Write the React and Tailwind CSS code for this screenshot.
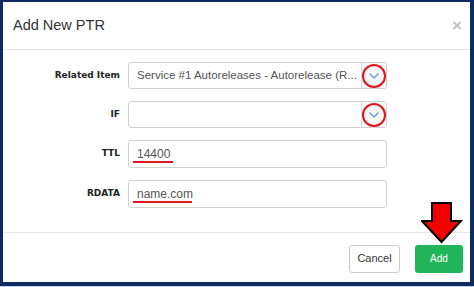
import React from "react";

function Chevron() {
  return (
    <svg width="10" height="6" viewBox="0 0 10 6" fill="none">
      <path d="M1 1l4 4 4-4" stroke="#6fa3d6" strokeWidth="1.6" strokeLinecap="round" strokeLinejoin="round" />
    </svg>
  );
}

function SelectBox({ value }) {
  return (
    <div className="relative flex h-[27px] w-[259px] rounded-[3px] border border-[#cfcfcf] bg-white">
      <div className="flex flex-1 items-center overflow-hidden whitespace-nowrap pl-[8px] text-[11.5px] text-[#555]">{value}</div>
      <div className="flex w-[25px] items-center justify-center border-l border-[#dcdcdc] bg-[#f7f7f7]">
        <Chevron />
      </div>
      <div className="absolute right-[0px] top-[1px] h-[24px] w-[24px] rounded-full border-2 border-[#e0141e]" />
    </div>
  );
}

function TextBox({ value, lineW }) {
  return (
    <div className="relative flex h-[28px] w-[259px] items-center rounded-[3px] border border-[#cfcfcf] bg-white pl-[8px] text-[12px] text-[#555]">
      {value}
      <div className="absolute bottom-[4px] left-[4px] h-[2px] bg-[#e3151c]" style={{ width: lineW }} />
    </div>
  );
}

function Row({ label, children, mt }) {
  return (
    <div className={`flex items-center ${mt}`}>
      <div
        className="w-[117px] text-right text-[9px] font-bold text-[#222]"
        style={{ fontFamily: '"DejaVu Sans", Verdana, sans-serif' }}
      >
        {label}
      </div>
      <div className="ml-[8px]">{children}</div>
    </div>
  );
}

export default function App() {
  return (
    <div className="h-[287px] w-[474px] bg-[#c9d2de]" style={{ fontFamily: '"Liberation Sans", Arial, sans-serif' }}>
      <div className="relative flex h-[286px] w-[474px] flex-col border-b-[4px] border-l-[3px] border-r-[4px] border-t-[2px] border-[#0d2b5e] bg-white">
        <div className="flex h-[48px] items-center justify-between border-b border-[#e8e8e8] pl-[10px] pr-[8px]">
          <div className="text-[14.5px] text-[#333]">Add New PTR</div>
          <div className="text-[17px] font-bold leading-none text-[#c0c0c0]">×</div>
        </div>
        <div className="flex h-[182px] flex-col pt-[12px]">
          <Row label="Related Item" mt="">
            <SelectBox value="Service #1 Autoreleases - Autorelease (R..." />
          </Row>
          <Row label="IF" mt="mt-[12px]">
            <SelectBox value="" />
          </Row>
          <Row label="TTL" mt="mt-[12px]">
            <TextBox value="14400" lineW={40} />
          </Row>
          <Row label="RDATA" mt="mt-[12px]">
            <TextBox value="name.com" lineW={59} />
          </Row>
        </div>
        <div className="flex flex-1 items-center justify-end gap-[15px] border-t border-[#e8e8e8] pr-[7px] pt-[2px]">
          <div className="flex h-[28px] w-[51px] items-center justify-center rounded-[3px] border border-[#ccc] bg-white text-[11px] text-[#333]">Cancel</div>
          <div className="flex h-[28px] w-[48px] items-center justify-center rounded-[3px] bg-[#22b559] text-[10px] text-white">Add</div>
        </div>
        <svg className="absolute left-[418px] top-[200px]" width="42" height="42" viewBox="0 0 42 42">
          <path d="M11 1h19v18h10L20.5 40 1 19h10z" fill="#f20000" stroke="#000" strokeWidth="2" strokeLinejoin="miter" />
        </svg>
      </div>
    </div>
  );
}
